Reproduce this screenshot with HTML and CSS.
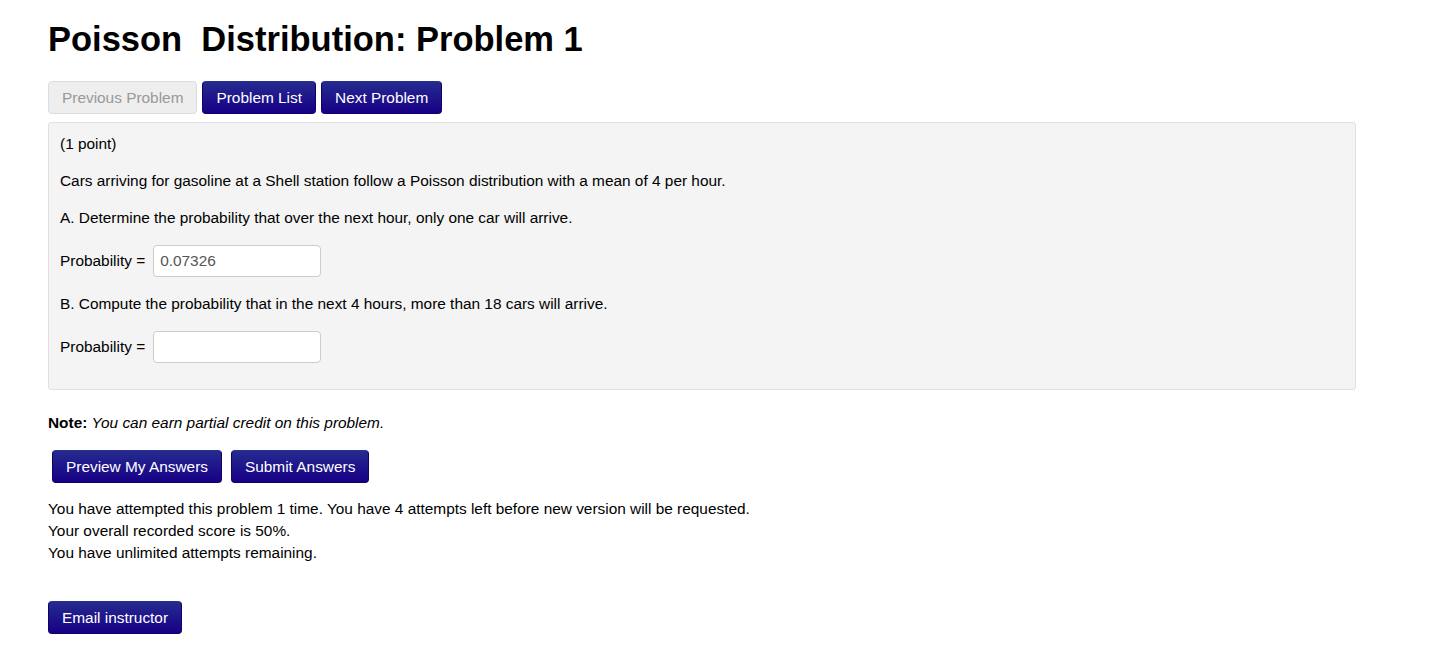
FILE: index.html
```html
<!DOCTYPE html>
<html>
<head>
<meta charset="utf-8">
<link rel="stylesheet" href="styles.css">
</head>
<body>
<div class="page">
  <h1 class="title">Poisson&nbsp; Distribution: Problem 1</h1>
  <div class="nav">
    <span class="btn btn-disabled">Previous Problem</span>
    <span class="btn">Problem List</span>
    <span class="btn">Next Problem</span>
  </div>
  <div class="problem">
    <p>(1 point)</p>
    <p>Cars arriving for gasoline at a Shell station follow a Poisson distribution with a mean of 4 per hour.</p>
    <p>A. Determine the probability that over the next hour, only one car will arrive.</p>
    <p class="answer">Probability = <input class="field" type="text" value="0.07326"></p>
    <p>B. Compute the probability that in the next 4 hours, more than 18 cars will arrive.</p>
    <p class="answer">Probability = <input class="field" type="text" value=""></p>
  </div>
  <p class="note"><b>Note:</b> <i>You can earn partial credit on this problem.</i></p>
  <div class="submit-row">
    <span class="btn">Preview My Answers</span>
    <span class="btn">Submit Answers</span>
  </div>
  <div class="status">
    You have attempted this problem 1 time. You have 4 attempts left before new version will be requested.<br>
    Your overall recorded score is 50%.<br>
    You have unlimited attempts remaining.
  </div>
  <div class="email-row">
    <span class="btn">Email instructor</span>
  </div>
</div>
</body>
</html>
```
FILE: styles.css
```css
html, body {
  margin: 0;
  padding: 0;
  background: #fff;
}
body {
  font-family: "Liberation Sans", Arial, sans-serif;
  font-size: 15.4px;
  line-height: 20px;
  color: #000;
}
.page {
  padding: 0 0 0 48px;
  width: 1308px;
}
.title {
  font-size: 34.5px;
  line-height: 40px;
  font-weight: bold;
  margin: 0;
  padding-top: 19px;
  height: 62px;
  box-sizing: content-box;
}
.nav {
  display: flex;
  gap: 5px;
  height: 33px;
}
.btn {
  display: inline-block;
  box-sizing: border-box;
  height: 33px;
  padding: 6px 13px 5px 13px;
  border: 1px solid #130066;
  border-top-color: #2a3090;
  border-radius: 4px;
  background: linear-gradient(#252b8f, #170086);
  color: #fff;
  font-size: 15.4px;
  line-height: 20px;
  white-space: nowrap;
}
.btn-disabled {
  background: #eeeeee;
  border-color: #dcdcdc;
  color: #999;
}
.problem {
  margin-top: 8px;
  background: #f4f4f4;
  border: 1px solid #e0e0e0;
  border-radius: 3px;
  padding: 11px 11px 9px 11px;
}
.problem p {
  margin: 0 0 17px 0;
}
.problem p.answer {
  display: flex;
  align-items: center;
  gap: 8px;
  height: 32px;
}
.field {
  box-sizing: border-box;
  width: 168px;
  height: 32px;
  border: 1px solid #cccccc;
  border-radius: 4px;
  background: #fff;
  padding: 4px 6px;
  font-family: "Liberation Sans", Arial, sans-serif;
  font-size: 15.4px;
  color: #555;
  margin: 0;
}
.note {
  margin: 23px 0 17px 0;
}
.submit-row {
  display: flex;
  gap: 9px;
  padding-left: 4px;
}
.status {
  margin-top: 15px;
  line-height: 22px;
}
.email-row {
  margin-top: 37px;
  display: flex;
}
```
